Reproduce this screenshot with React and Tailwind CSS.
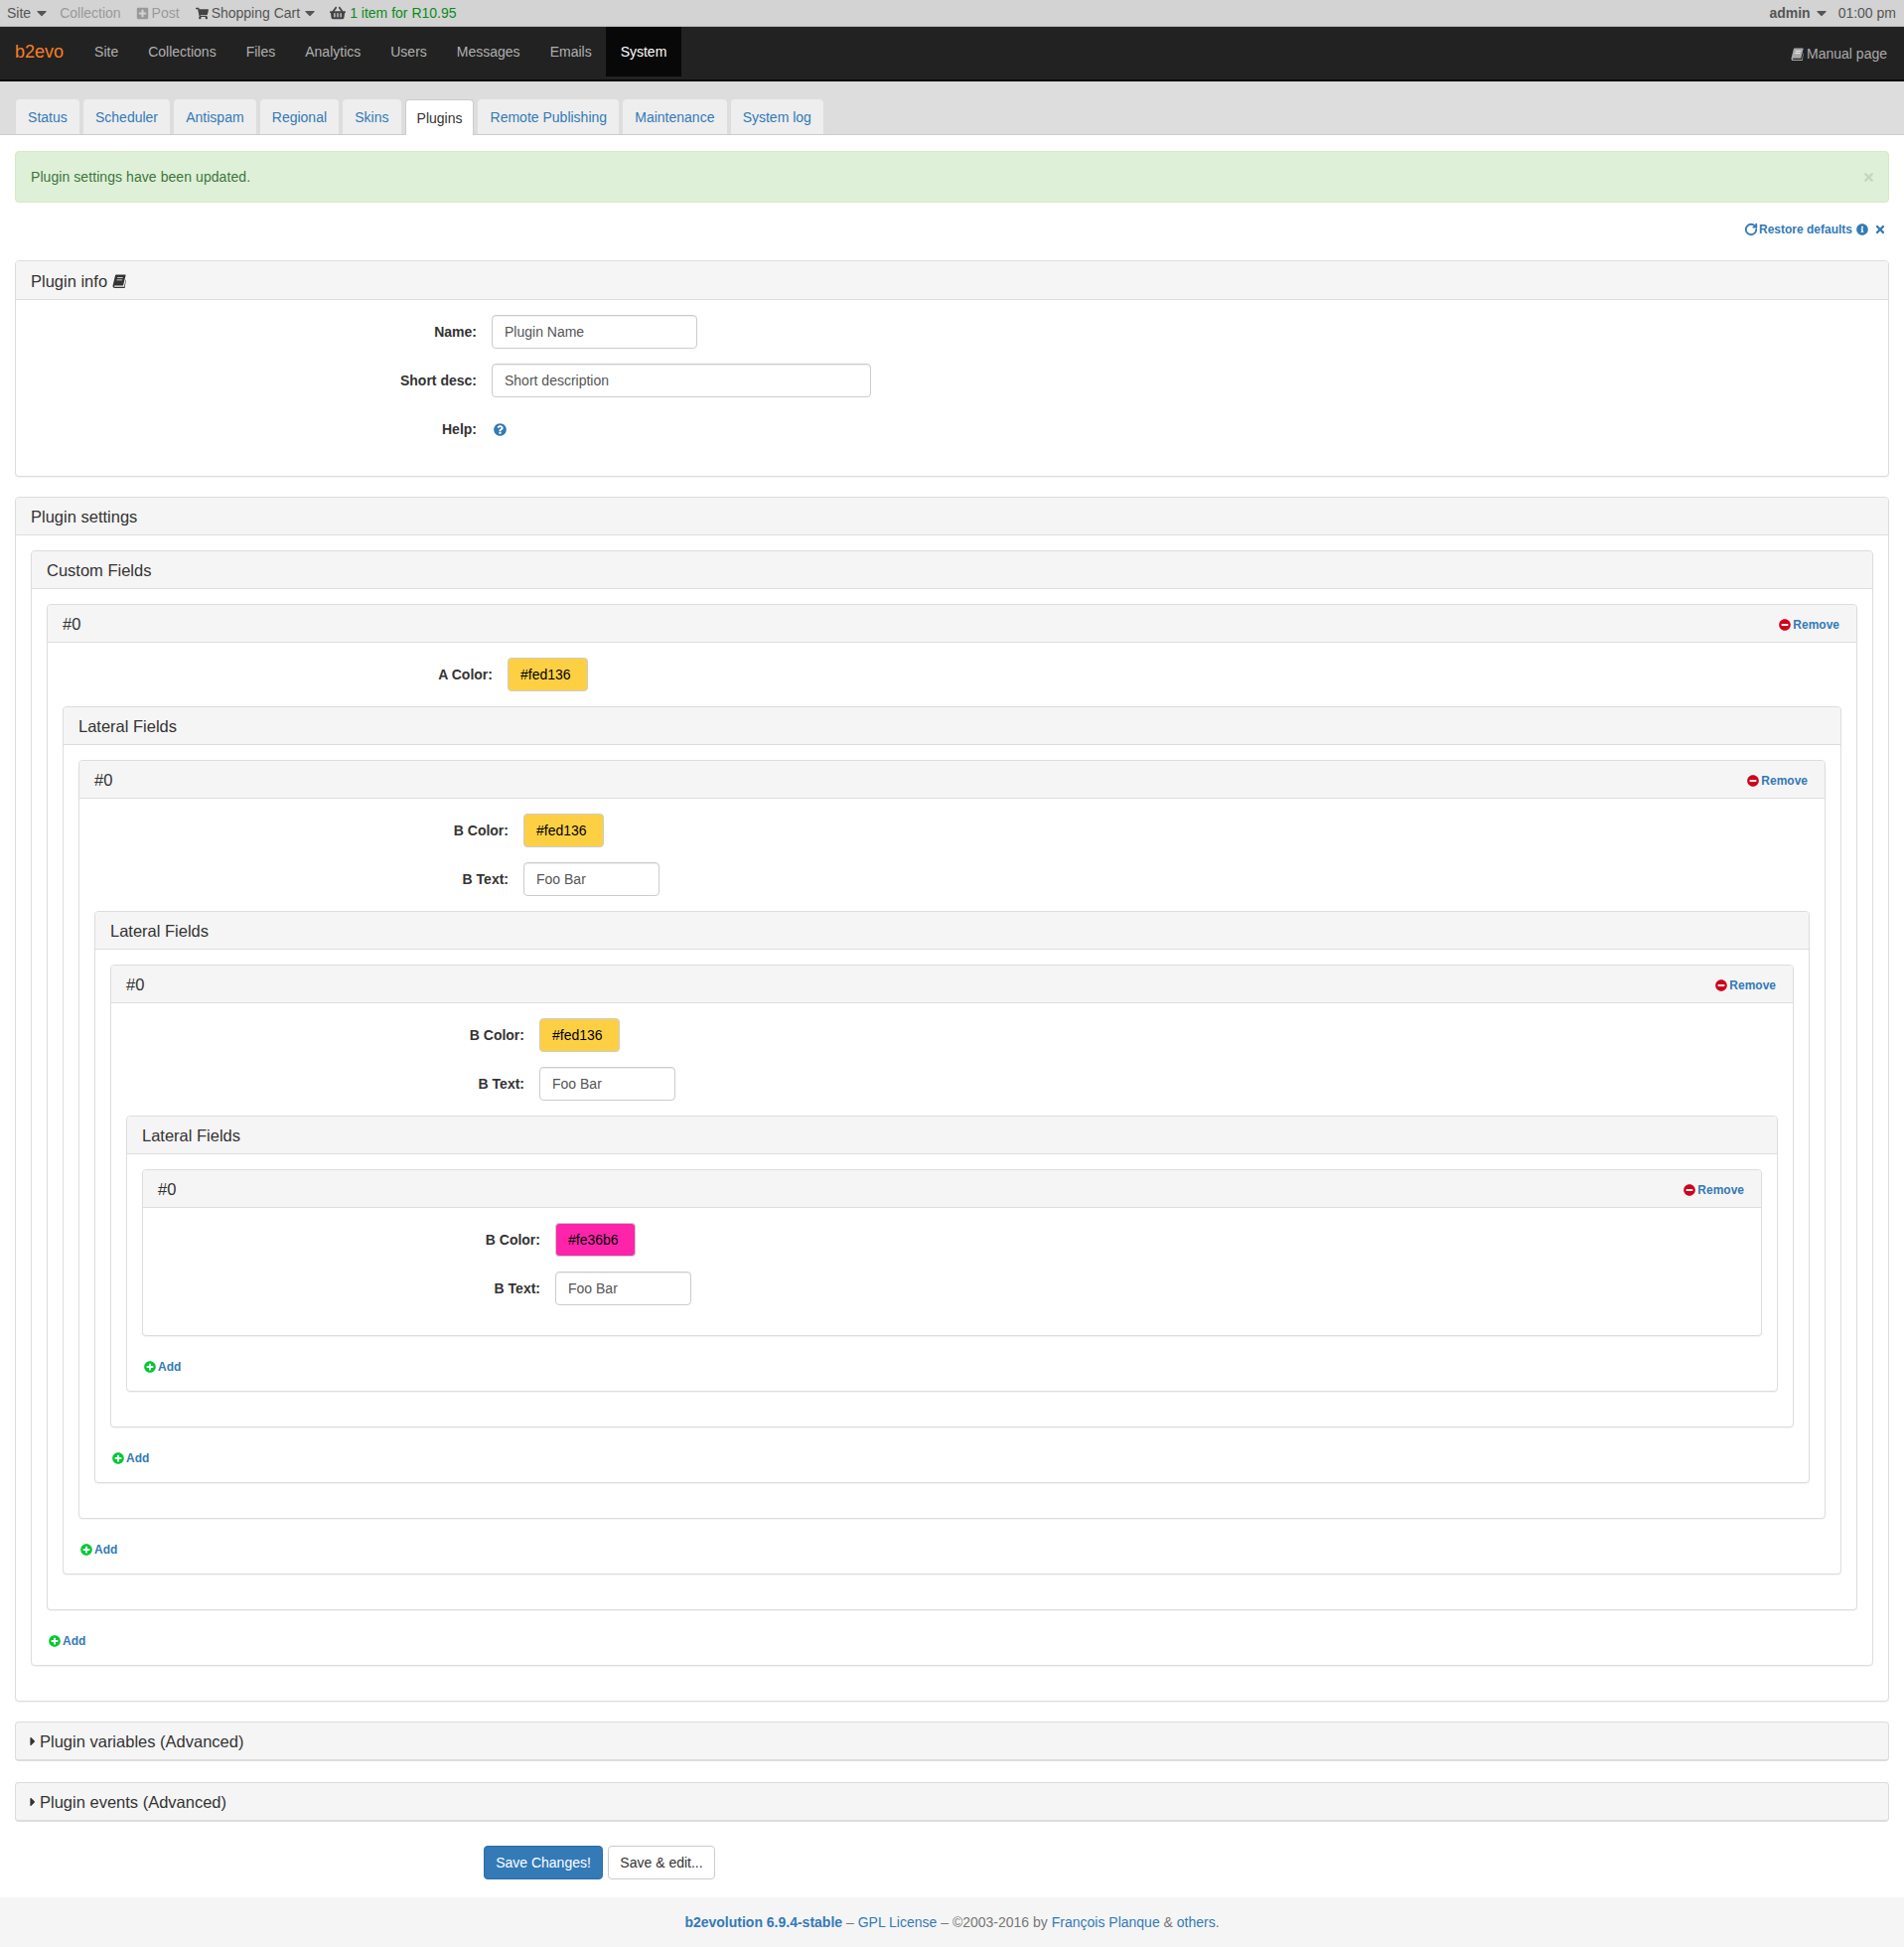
import React from 'react'
import { FaCaretDown, FaCaretRight, FaInfoCircle, FaMinusCircle, FaPlusCircle, FaPlusSquare, FaQuestionCircle, FaShoppingBasket, FaShoppingCart, FaTimes } from 'react-icons/fa'
import { RotateCw } from 'lucide-react'

const navLinks = ['Site', 'Collections', 'Files', 'Analytics', 'Users', 'Messages', 'Emails']
const tabs = ['Status', 'Scheduler', 'Antispam', 'Regional', 'Skins', 'Plugins', 'Remote Publishing', 'Maintenance', 'System log']

// slanted book, the font-awesome 4 one
const BookIcon = ({ className }) => (
  <svg viewBox="0 0 14 14" className={className} fill="currentColor">
    <path d="M4 0.5h9.5v1L11 11.5H3c-0.8 0-1 0.4-1 0.7s0.3 0.6 1 0.6h9l1.5-7h0.4L12.6 14H2.6C1.2 14 0.4 13 0.5 11.8L3 1.6C3.2 0.9 3.5 0.5 4 0.5z" />
    <path d="M5.2 3.2h5.6l-0.2 0.9H5z M4.6 5.4h5.6l-0.2 0.9H4.4z" fill="white" />
  </svg>
)

const Panel = ({ title, right, children, headerClass = 'h-[38px]' }) => (
  <div className="border border-[#ddd] rounded bg-white shadow-[0_1px_1px_rgba(0,0,0,0.05)]">
    <div className={`flex items-center justify-between px-[15px] bg-[#f5f5f5] border-b border-[#ddd] rounded-t text-[16.5px] text-[#333] ${headerClass}`}>
      <div className="flex items-center gap-[5px] pt-[1px]">{title}</div>
      {right}
    </div>
    <div className="p-[15px]">{children}</div>
  </div>
)

const Field = ({ label, labelWidth, children }) => (
  <div className="flex items-center h-[34px] mb-[15px] gap-[15px]">
    <label className={`font-bold text-right text-[#333] ${labelWidth}`}>{label}:</label>
    {children}
  </div>
)

const TextInput = ({ value, width }) => (
  <input
    className={`h-[34px] px-3 border border-[#ccc] rounded bg-white text-[#555] outline-none shadow-[inset_0_1px_1px_rgba(0,0,0,0.075)] ${width}`}
    defaultValue={value}
    readOnly
  />
)

const ColorInput = ({ value, color = 'bg-[#fdd043]' }) => (
  <input
    className={`h-[34px] w-[81px] px-3 border border-[#ccc] rounded text-black outline-none ${color}`}
    defaultValue={value}
    readOnly
  />
)

const Remove = () => (
  <a className="flex items-center gap-[2px] pr-[2px] pt-[2px] text-xs font-bold text-[#337ab7]">
    <FaMinusCircle className="text-[#d0021b] text-[12px]" />Remove
  </a>
)

const Add = () => (
  <a className="flex items-center gap-[2px] h-5 pl-[2px] pt-[1px] text-xs font-bold text-[#337ab7]">
    <FaPlusCircle className="text-[#00c832] text-[12px]" />Add
  </a>
)

const Lateral = ({ children }) => (
  <div className="mb-5">
    <Panel title="Lateral Fields">
      {children}
      <div className="mt-5"><Add /></div>
    </Panel>
  </div>
)

const Item = ({ children }) => (
  <Panel title="#0" right={<Remove />}>{children}</Panel>
)

const App = () => {
  return (
    <div className="w-[1917px] h-[1960px] bg-white text-sm leading-5 text-[#333] font-['Liberation_Sans',Arial,sans-serif]">
      <div className="flex items-center justify-between h-[27px] pl-[7px] pr-2 bg-[#d3d3d3] border-b border-[#bbb] text-[#555]">
        <div className="flex items-center">
          <span>Site</span>
          <FaCaretDown className="ml-[3px] text-[16px]" />
          <span className="ml-[10px] text-[#999]">Collection</span>
          <FaPlusSquare className="ml-[15px] text-[13px] text-[#999]" />
          <span className="ml-[3px] text-[#999]">Post</span>
          <FaShoppingCart className="ml-[16px] text-[13px] text-[#444]" />
          <span className="ml-[3px]">Shopping Cart</span>
          <FaCaretDown className="ml-[2px] text-[16px]" />
          <FaShoppingBasket className="ml-[12px] text-[16px] text-[#444]" />
          <span className="ml-[4px] text-[#0a8a1e]">1 item for R10.95</span>
        </div>
        <div className="flex items-center">
          <span className="font-bold">admin</span>
          <FaCaretDown className="ml-[3px] text-[16px]" />
          <span className="ml-[9px]">01:00 pm</span>
        </div>
      </div>

      <div className="flex justify-between h-[55px] bg-[#222] border-b-2 border-[#080808]">
        <div className="flex items-start">
          <a className="pl-[15px] pr-[16px] h-[50px] flex items-center text-lg text-[#f77f27]">b2evo</a>
          {navLinks.map((link) => (
            <a key={link} className="px-[15px] h-[50px] flex items-center text-[#b0b0b0]">{link}</a>
          ))}
          <a className="px-[15px] -ml-px h-[50px] flex items-center bg-[#080808] text-white">System</a>
        </div>
        <a className="flex items-center gap-[3px] pr-[17px] pt-[1px] h-[53px] text-[#aaa]"><BookIcon className="w-[13px] h-[13px]" />Manual page</a>
      </div>

      <div className="flex items-end gap-1 h-[54px] px-4 bg-[#ddd] border-b border-[#ccc]">
        {tabs.map((tab) => (
          tab === 'Plugins'
            ? <a key={tab} className="flex items-center h-[36px] -mb-px px-[11px] bg-white border border-[#ccc] border-b-0 rounded-t text-[#333]">{tab}</a>
            : <a key={tab} className="flex items-center h-[35px] px-[12.1px] bg-[#eee] rounded-t text-[#337ab7]">{tab}</a>
        ))}
      </div>

      <div className="px-[15px] pt-[16px]">
        <div className="flex items-center justify-between h-[52px] pl-[15px] pr-[13px] bg-[#dff0d8] border border-[#d6e9c6] rounded text-[#3c763d]">
          <span className="tracking-[0.07px]">Plugin settings have been updated.</span>
          <FaTimes className="text-[13px] text-[#c3d9bd]" />
        </div>

        <div className="flex items-center justify-end h-[58px] pr-[3px] pb-[5px] text-xs font-bold text-[#337ab7]">
          <RotateCw size={14} strokeWidth={3.2} className="mr-[1px]" />
          <span>Restore defaults</span>
          <FaInfoCircle className="ml-[4px] text-[12px]" />
          <FaTimes className="ml-[6px] text-[12px]" />
        </div>

        <div className="mb-5">
          <Panel headerClass="h-[39px]" title={<>Plugin info <BookIcon className="w-[14px] h-[14px]" /></>}>
            <Field label="Name" labelWidth="w-[449px]"><TextInput value="Plugin Name" width="w-[207px]" /></Field>
            <Field label="Short desc" labelWidth="w-[449px]"><TextInput value="Short description" width="w-[382px]" /></Field>
            <Field label="Help" labelWidth="w-[449px]"><FaQuestionCircle className="ml-[2px] text-[13px] text-[#337ab7]" /></Field>
          </Panel>
        </div>

        <div className="mb-5">
          <Panel title="Plugin settings">
            <Panel title="Custom Fields">
              <Item>
                <Field label="A Color" labelWidth="w-[433px]"><ColorInput value="#fed136" /></Field>
                <Lateral>
                  <Item>
                    <Field label="B Color" labelWidth="w-[417px]"><ColorInput value="#fed136" /></Field>
                    <Field label="B Text" labelWidth="w-[417px]"><TextInput value="Foo Bar" width="w-[137px]" /></Field>
                    <Lateral>
                      <Item>
                        <Field label="B Color" labelWidth="w-[401px]"><ColorInput value="#fed136" /></Field>
                        <Field label="B Text" labelWidth="w-[401px]"><TextInput value="Foo Bar" width="w-[137px]" /></Field>
                        <Lateral>
                          <Item>
                            <Field label="B Color" labelWidth="w-[385px]"><ColorInput value="#fe36b6" color="bg-[#fd24aa]" /></Field>
                            <Field label="B Text" labelWidth="w-[385px]"><TextInput value="Foo Bar" width="w-[137px]" /></Field>
                          </Item>
                        </Lateral>
                      </Item>
                    </Lateral>
                  </Item>
                </Lateral>
              </Item>
              <div className="mt-5"><Add /></div>
            </Panel>
            <div className="h-5" />
          </Panel>
        </div>

        {['Plugin variables (Advanced)', 'Plugin events (Advanced)'].map((title) => (
          <div key={title} className="flex items-center h-[40px] mb-[21px] px-[15px] pt-[1px] bg-[#f5f5f5] border border-[#ddd] border-b-2 rounded text-[16.5px]">
            <FaCaretRight className="text-[14px] -ml-[5px]" />{title}
          </div>
        ))}

        <div className="flex gap-[5px] pl-[472px] mt-[24px]">
          <button className="h-[34px] w-[120px] bg-[#337ab7] border border-[#2e6da4] rounded text-white">Save Changes!</button>
          <button className="h-[34px] w-[108px] bg-white border border-[#ccc] rounded text-[#333]">Save &amp; edit...</button>
        </div>
      </div>

      <div className="flex items-center justify-center h-[50px] mt-[18px] bg-[#f5f5f5] text-[#777]">
        <span><a className="font-bold text-[#337ab7]">b2evolution 6.9.4-stable</a> – <a className="text-[#337ab7]">GPL License</a> – ©2003-2016 by <a className="text-[#337ab7]">François Planque</a> &amp; <a className="text-[#337ab7]">others</a>.</span>
      </div>
    </div>
  )
}

export default App
